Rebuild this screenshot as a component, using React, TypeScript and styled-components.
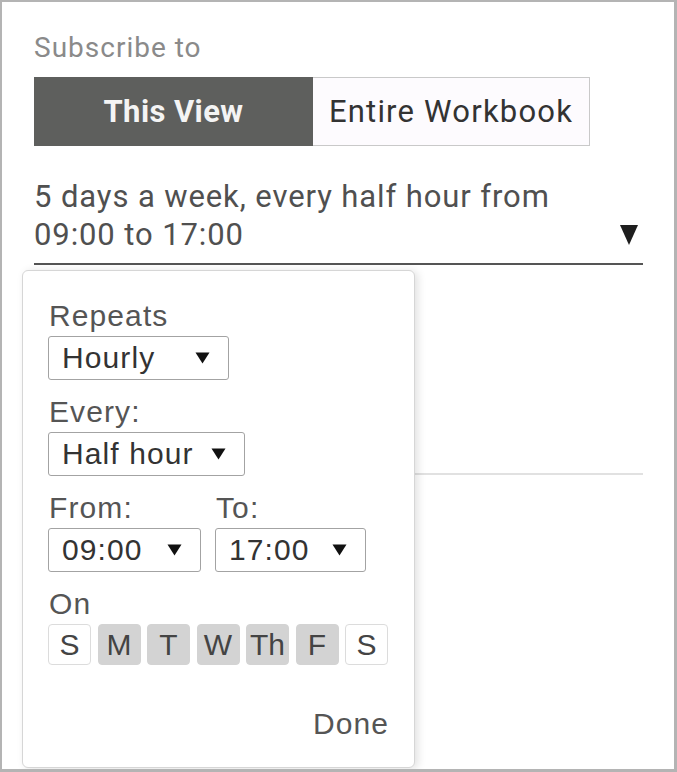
import React from "react";
import styled, { createGlobalStyle } from "styled-components";

const GlobalStyle = createGlobalStyle`
  html, body {
    margin: 0;
    padding: 0;
    background: #ffffff;
  }
  body {
    font-family: Roboto, "Liberation Sans", Arial, sans-serif;
  }
`;

const Frame = styled.div`
  position: relative;
  box-sizing: border-box;
  width: 677px;
  height: 772px;
  border-style: solid;
  border-color: #b4b4b4;
  border-width: 2px 3px 3px 2px;
  padding: 30px 31px 0 32px;
  background: #ffffff;
  overflow: hidden;
`;

const Heading = styled.div`
  font-family: Roboto, "Liberation Sans", sans-serif;
  font-size: 28px;
  line-height: 32px;
  letter-spacing: 1px;
  color: #8a8a8a;
`;

const Segmented = styled.div`
  display: grid;
  grid-template-columns: 279px 277px;
  width: 556px;
  height: 69px;
  margin-top: 13px;
`;

const SegButton = styled.button<{ $active?: boolean }>`
  box-sizing: border-box;
  height: 69px;
  margin: 0;
  padding: 0;
  font-family: Roboto, "Liberation Sans", sans-serif;
  font-size: 31px;
  letter-spacing: ${(p) => (p.$active ? "0.4px" : "1.2px")};
  font-weight: ${(p) => (p.$active ? 700 : 400)};
  color: ${(p) => (p.$active ? "#f4f4f4" : "#333333")};
  background: ${(p) => (p.$active ? "#5e5f5d" : "#fdfbfe")};
  border: 1px solid ${(p) => (p.$active ? "#5e5f5d" : "#c9c9c9")};
  border-left-width: ${(p) => (p.$active ? "1px" : "0")};
  cursor: pointer;
`;

const ScheduleField = styled.div`
  position: relative;
  margin-top: 32px;
  display: flex;
  align-items: flex-end;
  justify-content: space-between;
  padding: 0 5px 9px 0;
  border-bottom: 2px solid #555555;
`;

const ScheduleText = styled.div`
  font-family: Roboto, "Liberation Sans", sans-serif;
  font-size: 31px;
  line-height: 38px;
  letter-spacing: 0.9px;
  color: #505050;
`;

const BigCaret = styled.svg`
  display: block;
  width: 18px;
  height: 20px;
  margin-bottom: 9px;
`;

const NextField = styled.div`
  height: 208px;
  border-bottom: 2px solid #e1e1e1;
`;

const Popover = styled.div`
  position: absolute;
  top: calc(100% + 7px);
  left: -12px;
  z-index: 2;
  box-sizing: border-box;
  width: 393px;
  height: 498px;
  padding: 28px 25px 0 25px;
  background: #ffffff;
  border: 1px solid #d6d6d6;
  border-radius: 6px;
  box-shadow: 3px 1px 8px rgba(0, 0, 0, 0.12);
  font-family: "Liberation Sans", Arial, sans-serif;
  display: flex;
  flex-direction: column;
`;

const FieldStack = styled.div`
  display: flex;
  flex-direction: column;
  gap: 15px;
`;

const Field = styled.div`
  display: flex;
  flex-direction: column;
  align-items: flex-start;
`;

const Label = styled.div`
  font-size: 30px;
  line-height: 34px;
  letter-spacing: 1.1px;
  color: #555555;
  margin-bottom: 3px;
  padding-left: 1px;
`;

const Select = styled.div<{ $width: number }>`
  box-sizing: border-box;
  width: ${(p) => p.$width}px;
  height: 44px;
  display: flex;
  align-items: center;
  justify-content: space-between;
  padding: 0 18px 0 13px;
  border: 1px solid #a3a3a3;
  border-radius: 3px;
  background: #ffffff;
  color: #333333;
  font-size: 30px;
  line-height: 34px;
  letter-spacing: 1.1px;
`;

const SmallCaret = styled.svg`
  display: block;
  width: 15px;
  height: 12px;
  flex: none;
`;

const TimeRow = styled.div`
  display: grid;
  grid-template-columns: 153px 151px;
  column-gap: 14px;
`;

const Days = styled.div`
  display: flex;
  gap: 6.5px;
`;

const Day = styled.div<{ $on?: boolean }>`
  box-sizing: border-box;
  width: 43px;
  height: 41px;
  display: flex;
  align-items: center;
  justify-content: center;
  border-radius: 4px;
  border: 1px solid ${(p) => (p.$on ? "#d3d3d3" : "#dcdcdc")};
  background: ${(p) => (p.$on ? "#d3d3d3" : "#ffffff")};
  color: #444444;
  font-size: 30px;
  line-height: 34px;
`;

const DoneRow = styled.div`
  margin-top: 42px;
  display: flex;
  justify-content: flex-end;
`;

const DoneButton = styled.button`
  margin: 0;
  padding: 0;
  border: none;
  background: none;
  font-family: "Liberation Sans", Arial, sans-serif;
  font-size: 30px;
  line-height: 34px;
  letter-spacing: 1.1px;
  color: #555555;
  cursor: pointer;
`;

const Caret = () => (
  <SmallCaret viewBox="0 0 15 12">
    <path d="M0.5 0.5 H14.5 L7.5 11.5 Z" fill="#111111" />
  </SmallCaret>
);

const days: { label: string; on: boolean }[] = [
  { label: "S", on: false },
  { label: "M", on: true },
  { label: "T", on: true },
  { label: "W", on: true },
  { label: "Th", on: true },
  { label: "F", on: true },
  { label: "S", on: false },
];

export default function App() {
  return (
    <>
      <GlobalStyle />
      <Frame>
        <Heading>Subscribe to</Heading>
        <Segmented>
          <SegButton $active>This View</SegButton>
          <SegButton>Entire Workbook</SegButton>
        </Segmented>
        <ScheduleField>
          <ScheduleText>
            5 days a week, every half hour from
            <br />
            09:00 to 17:00
          </ScheduleText>
          <BigCaret viewBox="0 0 18 20">
            <path d="M0 0 H18 L9 20 Z" fill="#1e1e1e" />
          </BigCaret>
          <Popover>
            <FieldStack>
              <Field>
                <Label>Repeats</Label>
                <Select $width={181}>
                  <span>Hourly</span>
                  <Caret />
                </Select>
              </Field>
              <Field>
                <Label>Every:</Label>
                <Select $width={197}>
                  <span>Half hour</span>
                  <Caret />
                </Select>
              </Field>
              <TimeRow>
                <Field>
                  <Label>From:</Label>
                  <Select $width={153}>
                    <span>09:00</span>
                    <Caret />
                  </Select>
                </Field>
                <Field>
                  <Label>To:</Label>
                  <Select $width={151}>
                    <span>17:00</span>
                    <Caret />
                  </Select>
                </Field>
              </TimeRow>
              <Field>
                <Label>On</Label>
                <Days>
                  {days.map((d, i) => (
                    <Day key={i} $on={d.on}>
                      {d.label}
                    </Day>
                  ))}
                </Days>
              </Field>
            </FieldStack>
            <DoneRow>
              <DoneButton>Done</DoneButton>
            </DoneRow>
          </Popover>
        </ScheduleField>
        <NextField />
      </Frame>
    </>
  );
}
